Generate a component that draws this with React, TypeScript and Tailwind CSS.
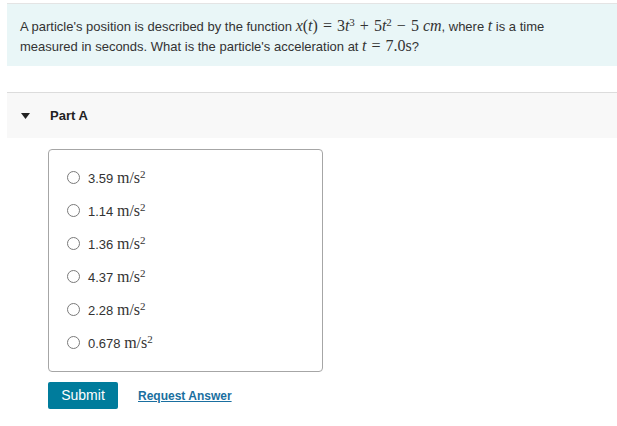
const serif = { fontFamily: '"Liberation Serif", "DejaVu Serif", serif' };

const Unit = ({ value }: { value: string }) => (
  <span className="text-[13px] text-[#333]">
    {value}{' '}
    <span className="text-[16px]" style={serif}>
      m/s<sup className="text-[11px] -top-[0.45em] leading-[0]">2</sup>
    </span>
  </span>
);

const options = ['3.59', '1.14', '1.36', '4.37', '2.28', '0.678'];

export default function App() {
  return (
    <div className="min-h-screen bg-white font-['Liberation_Sans',Arial,sans-serif] text-[#333]">
      <div className="pl-[7px] pt-[3px]">
        <div className="border-t border-[#e4e4e4] bg-[#e9f6f7] pb-[10px] pl-[13px] pr-[40px] pt-[12px] text-[13px] leading-[19px]">
          A particle's position is described by the function{' '}
          <span className="text-[16px]" style={serif}>
            <i>x</i>(<i>t</i>)<span className="mx-[5px]">=</span>3<i>t</i>
            <sup className="text-[11px] -top-[0.5em] leading-[0]">3</sup>
            <span className="mx-[5px]">+</span>5<i>t</i>
            <sup className="text-[11px] -top-[0.5em] leading-[0]">2</sup>
            <span className="mx-[5px]">−</span>5 <i>cm</i>
          </span>
          , where <i className="text-[16px]" style={serif}>t</i> is a time measured in seconds. What is the
          particle's acceleration at{' '}
          <span className="text-[16px]" style={serif}>
            <i>t</i>
            <span className="mx-[5px]">=</span>7.0s
          </span>
          ?
        </div>
        <div className="mt-[26px] flex h-[46px] items-center border-t border-[#dcdcdc] bg-[#f8f8f8]">
          <svg width="9" height="6" viewBox="0 0 9 6" className="ml-[14px]">
            <path d="M0 0 L9 0 L4.5 6 Z" fill="#222" />
          </svg>
          <span className="ml-[20px] text-[13px] font-bold text-[#222]">Part A</span>
        </div>
      </div>
      <div className="ml-[48px] mt-[11px] w-[275px] rounded-[4px] border border-[#a6a6a6] pb-[12px] pt-[11px]">
        {options.map((o) => (
          <label key={o} className="flex h-[33px] items-center pl-[18px]">
            <span className="h-[13px] w-[13px] rounded-full border border-[#7a7a7a] bg-white" />
            <span className="ml-[8px]">
              <Unit value={o} />
            </span>
          </label>
        ))}
      </div>
      <div className="ml-[48px] mt-[10px] flex items-center">
        <button className="h-[27px] w-[70px] rounded-[2px] bg-[#007c9c] text-[14px] text-white">Submit</button>
        <a className="ml-[20px] text-[12px] font-bold text-[#1a6fa0] underline">Request Answer</a>
      </div>
    </div>
  );
}
